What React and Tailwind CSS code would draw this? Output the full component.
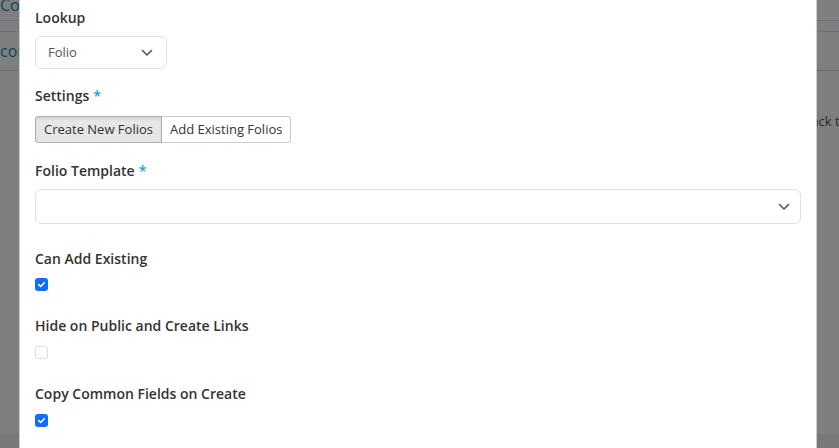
import React from 'react';

const Chevron = () => (
  <svg width="12" height="8" viewBox="0 0 12 8" fill="none">
    <path d="M1.5 1.5 6 6l4.5-4.5" stroke="#555" strokeWidth="1.6" strokeLinecap="round" strokeLinejoin="round" />
  </svg>
);

const Check = ({ checked }) =>
  checked ? (
    <div className="flex h-[13px] w-[13px] items-center justify-center rounded-[3px] bg-[#0d6efd]">
      <svg width="9" height="9" viewBox="0 0 10 10" fill="none">
        <path d="M2 5.2 4.1 7.2 8 3" stroke="#fff" strokeWidth="1.8" strokeLinecap="round" strokeLinejoin="round" />
      </svg>
    </div>
  ) : (
    <div className="h-[13px] w-[13px] rounded-[3px] border border-[#dcdcdc] bg-white" />
  );

const Label = ({ children, required, className = '' }) => (
  <div className={`text-[14px] font-semibold leading-5 text-[#333] ${className}`}>
    {children}
    {required && <span className="ml-1 text-[#1aa3d6]">*</span>}
  </div>
);

export default function App() {
  return (
    <div className="relative h-[448px] w-[839px] overflow-hidden bg-white" style={{ fontFamily: '"Open Sans", sans-serif' }}>
      {/* page underneath the modal */}
      <div className="flex h-full flex-col">
        <div className="h-[21px] border-b border-[#d6e2f0] text-[16px] leading-[10px] text-[#1a93b8]">Co</div>
        <div className="h-[11px] border-b border-[#d6e2f0]" />
        <div className="flex h-[39px] items-center border-b border-[#d6e2f0] text-[16px] text-[#1a93b8]">con</div>
        <div className="pt-[41px] pl-[803px] text-[13px] whitespace-nowrap text-[#555]">Back to list</div>
        <div className="flex-1" />
        <div className="h-[14px] bg-[#f0f0f0]" />
      </div>

      {/* backdrop + modal */}
      <div className="absolute inset-0 flex bg-black/50 pl-[19px]">
        <div className="h-[470px] w-[798px] border-x border-black/20 bg-white px-[15px] pt-[8px]">
          <Label>Lookup</Label>
          <div className="mt-[8px] flex h-[33px] w-[132px] items-center justify-between rounded-[6px] border border-[#dee2e6] pl-[12px] pr-[13px] text-[13px] text-[#555]">
            <span>Folio</span>
            <Chevron />
          </div>

          <Label required className="mt-[17px]">Settings</Label>
          <div className="mt-[10px] flex h-[27px] text-[13px] whitespace-nowrap text-[#333]">
            <div className="flex items-center rounded-l-[3px] border border-[#adadad] bg-[#e6e6e6] px-[8px] shadow-[inset_0_2px_3px_rgba(0,0,0,0.08)]">
              Create New Folios
            </div>
            <div className="flex items-center rounded-r-[3px] border border-l-0 border-[#ccc] bg-white px-[8px]">
              Add Existing Folios
            </div>
          </div>

          <Label required className="mt-[18px]">Folio Template</Label>
          <div className="mt-[8px] flex h-[35px] items-center justify-end rounded-[6px] border border-[#dee2e6] pr-[10px]">
            <Chevron />
          </div>

          <Label className="mt-[25px]">Can Add Existing</Label>
          <div className="mt-[9px]"><Check checked /></div>

          <Label className="mt-[25px]">Hide on Public and Create Links</Label>
          <div className="mt-[10px]"><Check /></div>

          <Label className="mt-[25px]">Copy Common Fields on Create</Label>
          <div className="mt-[10px]"><Check checked /></div>
        </div>
      </div>
    </div>
  );
}
